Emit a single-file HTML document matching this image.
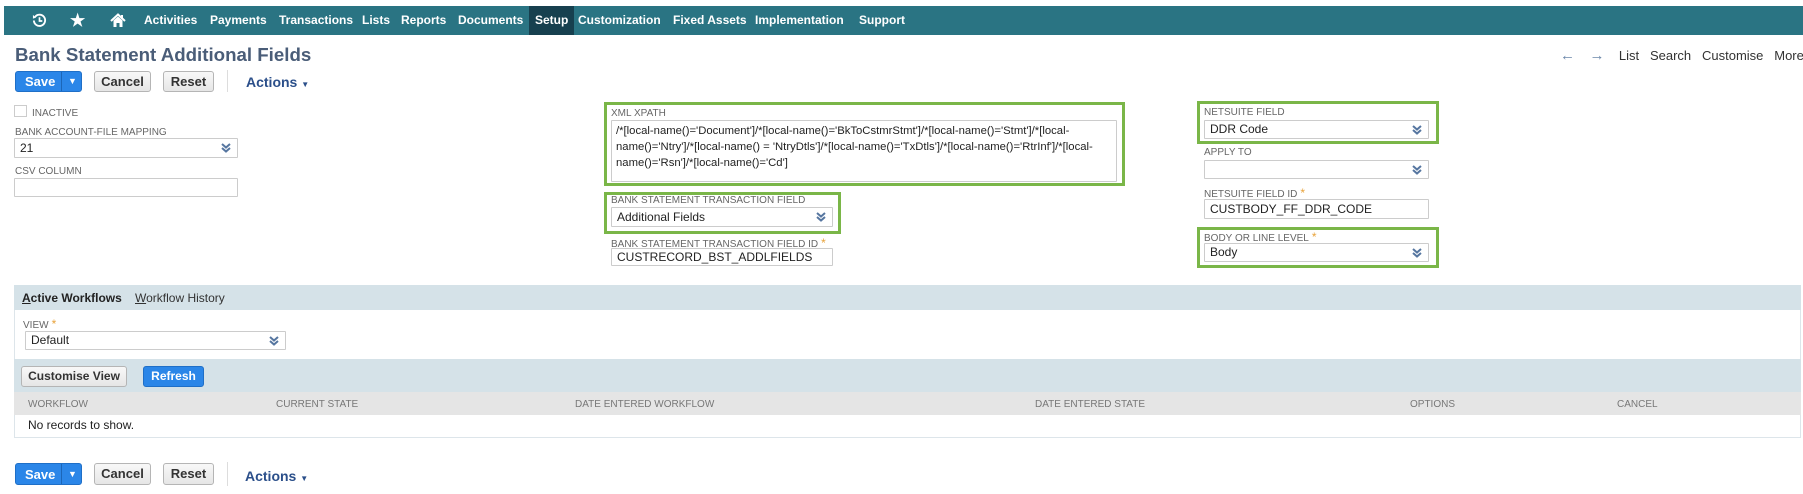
<!DOCTYPE html>
<html><head><meta charset="utf-8"><style>
*{box-sizing:border-box;margin:0;padding:0}
body{width:1803px;height:494px;background:#fff;font-family:"Liberation Sans",sans-serif;position:relative;overflow:hidden;color:#333}
.a{position:absolute;white-space:nowrap}
.nav{position:absolute;left:4px;right:0;top:6px;height:29px;background:#2a7483}
.nav .i{position:absolute;top:0;height:29px;line-height:29px;color:#fff;font-weight:bold;font-size:12px}
.setup{background:#17404f;padding:0 6px}
.lbl{position:absolute;font-size:10px;color:#666;white-space:nowrap;text-transform:uppercase}
.star{color:#e8a33b;font-size:12px;margin-left:3px}
.inp{position:absolute;border:1px solid #ccc;background:#fff;font-size:12px;color:#222;padding-left:5px;white-space:nowrap;border-radius:1px}
.dd{position:absolute;right:6px;top:50%;transform:translateY(-50%);width:10px;height:10px}
.green{position:absolute;border:3px solid #7ab648}
.btn{position:absolute;border:1px solid #b5b5b5;background:linear-gradient(#f8f8f8,#e6e6e6);border-radius:3px;font-size:13px;font-weight:bold;color:#333;text-align:center}
.blue{position:absolute;background:#2b86e8;border:1px solid #1f6fc7;border-radius:3px;color:#fff;font-weight:bold;font-size:13px}
.act{position:absolute;color:#2b4f8a;font-size:14px;font-weight:bold}
</style></head><body>
<div class="nav">
<svg class="a" style="left:28px;top:7px" width="15" height="15" viewBox="0 0 16 16"><path d="M3 4.5A6 6 0 1 1 2 8" fill="none" stroke="#fff" stroke-width="2"/><path d="M1 2 L4 5 L1 6z" fill="#fff"/><path d="M8 4.5V8.5H11" fill="none" stroke="#fff" stroke-width="1.8"/></svg>
<div class="i" style="left:66px;font-size:17px">★</div>
<svg class="a" style="left:106px;top:7px" width="16" height="15" viewBox="0 0 16 15"><path d="M1 8L8 1.5L15 8" fill="none" stroke="#fff" stroke-width="2"/><path d="M3.5 7.5V14H6.5V10H9.5V14H12.5V7.5L8 3.5z" fill="#fff"/><rect x="11" y="2" width="2" height="4" fill="#fff"/></svg>
<div class="i" style="left:140px">Activities</div>
<div class="i" style="left:206px">Payments</div>
<div class="i" style="left:275px">Transactions</div>
<div class="i" style="left:358px">Lists</div>
<div class="i" style="left:397px">Reports</div>
<div class="i" style="left:454px">Documents</div>
<div class="i setup" style="left:525px">Setup</div>
<div class="i" style="left:574px">Customization</div>
<div class="i" style="left:669px">Fixed Assets</div>
<div class="i" style="left:751px">Implementation</div>
<div class="i" style="left:855px">Support</div>
</div>

<div class="a" style="left:15px;top:44px;font-size:18.7px;font-weight:bold;color:#4a5d78">Bank Statement Additional Fields</div>
<div class="a" style="left:1560px;top:47px;font-size:13px;color:#333"><span style="color:#6b87aa;font-weight:bold;font-size:15px">&#8592;</span>&nbsp;&nbsp;&nbsp;&nbsp;<span style="color:#6b87aa;font-weight:bold;font-size:15px">&#8594;</span>&nbsp;&nbsp;&nbsp;&nbsp;List&nbsp;&nbsp;&nbsp;Search&nbsp;&nbsp;&nbsp;Customise&nbsp;&nbsp;&nbsp;More</div>

<!-- top buttons -->
<div class="blue" style="left:15px;top:71px;width:67px;height:21px"><span class="a" style="left:9px;top:2px">Save</span><span class="a" style="left:45px;top:0;bottom:0;border-left:1px solid #1c66b8"></span><span class="a" style="left:52px;top:4px;font-size:9px">▼</span></div>
<div class="btn" style="left:94px;top:71px;width:57px;height:21px;line-height:19px">Cancel</div>
<div class="btn" style="left:163px;top:71px;width:51px;height:21px;line-height:19px">Reset</div>
<div class="a" style="left:227px;top:70px;width:1px;height:22px;background:#ddd"></div>
<div class="act" style="left:246px;top:74px">Actions <span style="font-size:8px">▼</span></div>

<!-- left column -->
<div class="a" style="left:14px;top:105px;width:13px;height:12px;border:1px solid #ccc"></div>
<div class="lbl" style="left:32px;top:108px">INACTIVE</div>
<div class="lbl" style="left:15px;top:127px">BANK ACCOUNT-FILE MAPPING</div>
<div class="inp" style="left:14px;top:138px;width:224px;height:20px;line-height:18px">21<svg class="dd" viewBox="0 0 10 10"><path d="M1 1L5 4.5L9 1M1 5L5 8.5L9 5" fill="none" stroke="#5676a0" stroke-width="2"/></svg></div>
<div class="lbl" style="left:15px;top:166px">CSV COLUMN</div>
<div class="inp" style="left:14px;top:178px;width:224px;height:19px"></div>

<!-- middle -->
<div class="green" style="left:604px;top:102px;width:521px;height:84px"></div>
<div class="lbl" style="left:611px;top:108px">XML XPATH</div>
<div class="inp" style="left:611px;top:120px;width:506px;height:62px;font-size:11.3px;line-height:16px;white-space:normal;padding:2px 4px">/*[local-name()='Document']/*[local-name()='BkToCstmrStmt']/*[local-name()='Stmt']/*[local-<br>name()='Ntry']/*[local-name() = 'NtryDtls']/*[local-name()='TxDtls']/*[local-name()='RtrInf']/*[local-<br>name()='Rsn']/*[local-name()='Cd']</div>
<div class="green" style="left:604px;top:192px;width:237px;height:42px"></div>
<div class="lbl" style="left:611px;top:195px">BANK STATEMENT TRANSACTION FIELD</div>
<div class="inp" style="left:611px;top:207px;width:222px;height:20px;line-height:18px">Additional Fields<svg class="dd" viewBox="0 0 10 10"><path d="M1 1L5 4.5L9 1M1 5L5 8.5L9 5" fill="none" stroke="#5676a0" stroke-width="2"/></svg></div>
<div class="lbl" style="left:611px;top:236px">BANK STATEMENT TRANSACTION FIELD ID<span class="star">*</span></div>
<div class="inp" style="left:611px;top:248px;width:222px;height:18px;line-height:16px">CUSTRECORD_BST_ADDLFIELDS</div>

<!-- right -->
<div class="green" style="left:1197px;top:101px;width:242px;height:43px"></div>
<div class="lbl" style="left:1204px;top:107px">NETSUITE FIELD</div>
<div class="inp" style="left:1204px;top:120px;width:225px;height:19px;line-height:17px">DDR Code<svg class="dd" viewBox="0 0 10 10"><path d="M1 1L5 4.5L9 1M1 5L5 8.5L9 5" fill="none" stroke="#5676a0" stroke-width="2"/></svg></div>
<div class="lbl" style="left:1204px;top:147px">APPLY TO</div>
<div class="inp" style="left:1204px;top:160px;width:225px;height:19px"><svg class="dd" viewBox="0 0 10 10"><path d="M1 1L5 4.5L9 1M1 5L5 8.5L9 5" fill="none" stroke="#5676a0" stroke-width="2"/></svg></div>
<div class="lbl" style="left:1204px;top:186px">NETSUITE FIELD ID<span class="star">*</span></div>
<div class="inp" style="left:1204px;top:199px;width:225px;height:20px;line-height:18px">CUSTBODY_FF_DDR_CODE</div>
<div class="green" style="left:1197px;top:227px;width:242px;height:41px"></div>
<div class="lbl" style="left:1204px;top:230px">BODY OR LINE LEVEL<span class="star">*</span></div>
<div class="inp" style="left:1204px;top:243px;width:225px;height:19px;line-height:17px">Body<svg class="dd" viewBox="0 0 10 10"><path d="M1 1L5 4.5L9 1M1 5L5 8.5L9 5" fill="none" stroke="#5676a0" stroke-width="2"/></svg></div>

<!-- workflow panel -->
<div class="a" style="left:14px;top:285px;width:1787px;height:153px;border:1px solid #dde5ea;background:#fff"></div>
<div class="a" style="left:14px;top:285px;width:1787px;height:25px;background:#d5e2e8"></div>
<div class="a" style="left:22px;top:291px;font-size:12px;font-weight:bold;color:#222"><u>A</u>ctive Workflows</div>
<div class="a" style="left:135px;top:291px;font-size:12px;color:#333"><u>W</u>orkflow History</div>
<div class="lbl" style="left:23px;top:317px">VIEW<span class="star">*</span></div>
<div class="inp" style="left:25px;top:331px;width:261px;height:19px;line-height:17px">Default<svg class="dd" viewBox="0 0 10 10"><path d="M1 1L5 4.5L9 1M1 5L5 8.5L9 5" fill="none" stroke="#5676a0" stroke-width="2"/></svg></div>
<div class="a" style="left:14px;top:359px;width:1787px;height:33px;background:#d5e2e8"></div>
<div class="btn" style="left:21px;top:366px;width:106px;height:21px;line-height:19px;font-size:12px">Customise View</div>
<div class="blue" style="left:143px;top:366px;width:61px;height:21px;line-height:19px;text-align:center;font-size:12px">Refresh</div>
<div class="a" style="left:14px;top:392px;width:1787px;height:23px;background:#e5e5e5"></div>
<div class="lbl" style="left:28px;top:399px;color:#777">WORKFLOW</div>
<div class="lbl" style="left:276px;top:399px;color:#777">CURRENT STATE</div>
<div class="lbl" style="left:575px;top:399px;color:#777">DATE ENTERED WORKFLOW</div>
<div class="lbl" style="left:1035px;top:399px;color:#777">DATE ENTERED STATE</div>
<div class="lbl" style="left:1410px;top:399px;color:#777">OPTIONS</div>
<div class="lbl" style="left:1617px;top:399px;color:#777">CANCEL</div>
<div class="a" style="left:28px;top:418px;font-size:12px;color:#222">No records to show.</div>

<!-- bottom buttons -->
<div class="blue" style="left:15px;top:463px;width:67px;height:22px"><span class="a" style="left:9px;top:3px">Save</span><span class="a" style="left:45px;top:0;bottom:0;border-left:1px solid #1c66b8"></span><span class="a" style="left:52px;top:5px;font-size:9px">▼</span></div>
<div class="btn" style="left:94px;top:463px;width:57px;height:22px;line-height:20px">Cancel</div>
<div class="btn" style="left:163px;top:463px;width:51px;height:22px;line-height:20px">Reset</div>
<div class="a" style="left:227px;top:462px;width:1px;height:24px;background:#ddd"></div>
<div class="act" style="left:245px;top:468px">Actions <span style="font-size:8px">▼</span></div>
</body></html>
